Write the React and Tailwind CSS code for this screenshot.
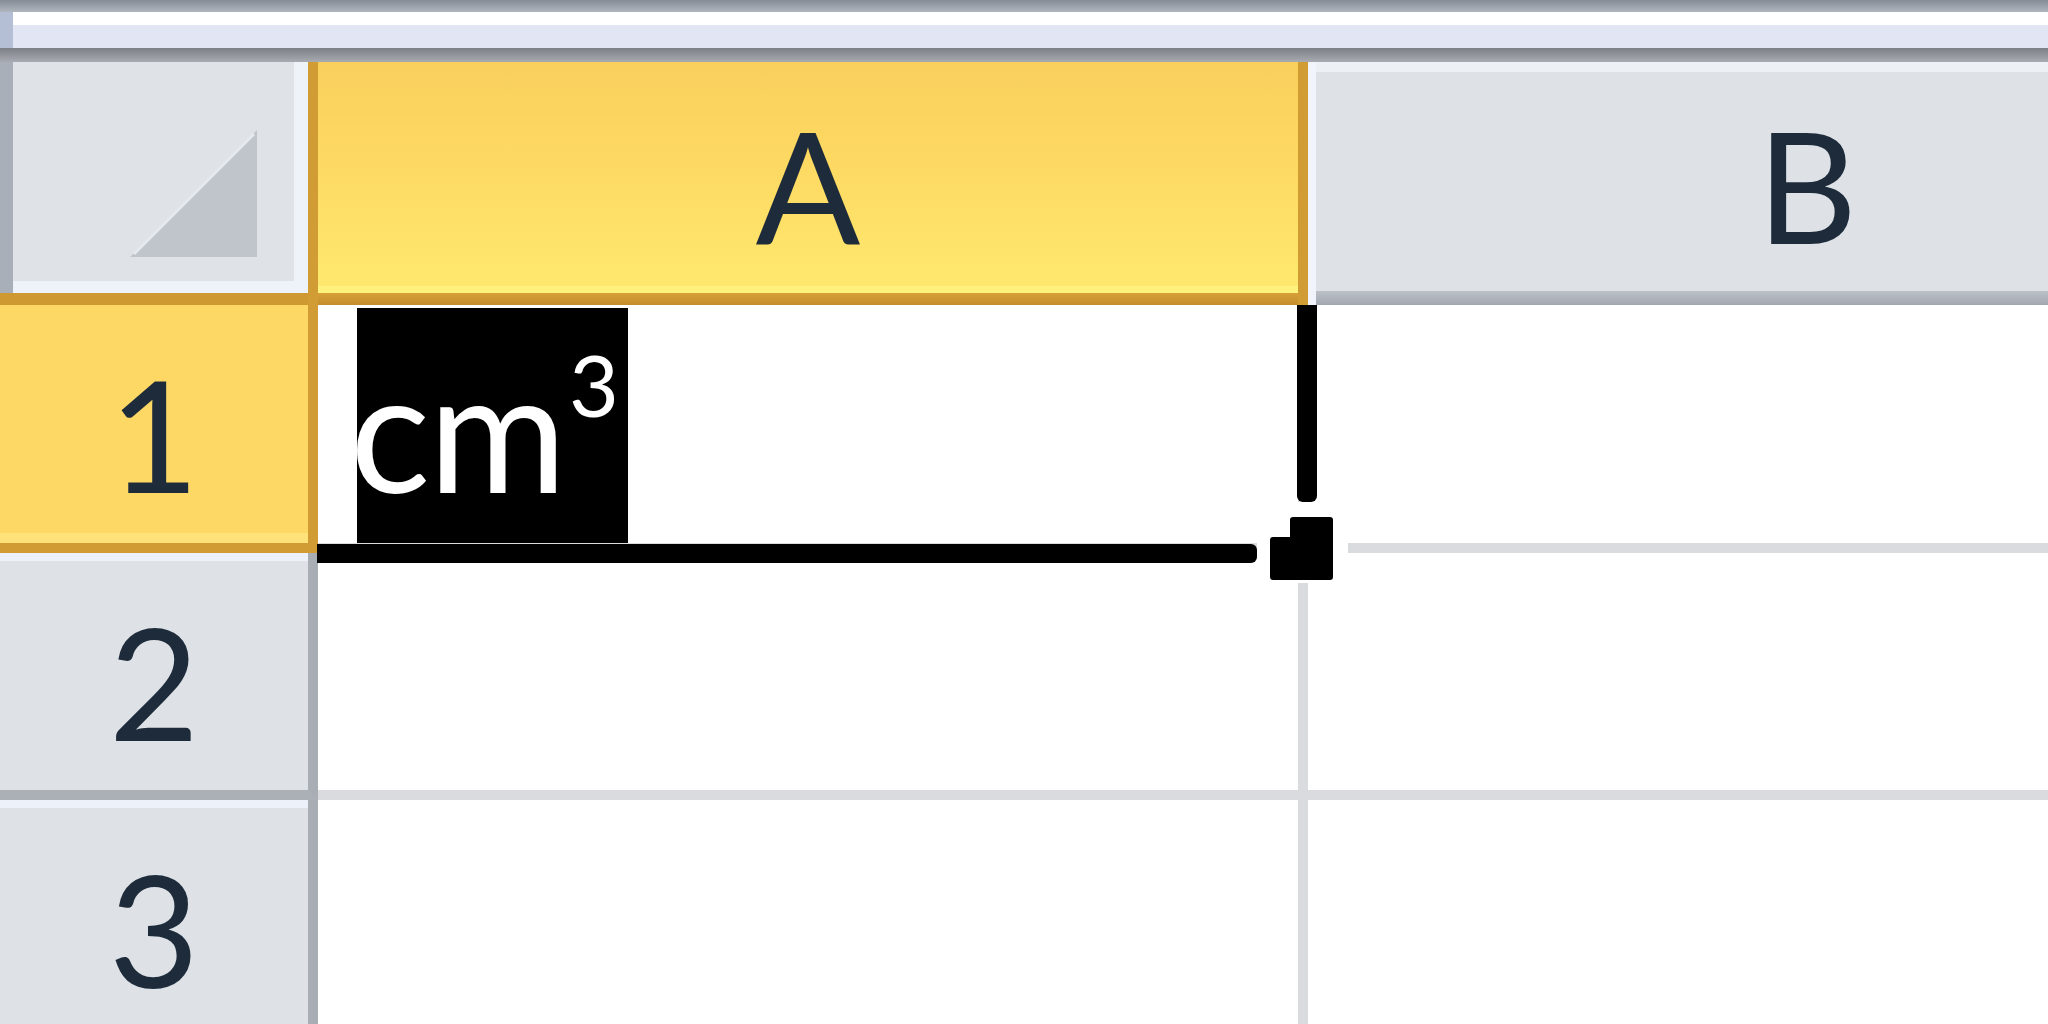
export default function App() {
  return (
    <div className="relative w-[2048px] h-[1024px] overflow-hidden bg-white font-['Lato','Liberation_Sans',sans-serif] text-[#1d2b3a]">
      {/* window top bars */}
      <div className="h-[12px] bg-gradient-to-b from-[#858c96] to-[#b0b6be]" />
      <div className="flex h-[36px]">
        <div className="w-[13px] shrink-0 bg-[#b4bed4]" />
        <div className="flex-1 flex flex-col">
          <div className="h-[13px] bg-white" />
          <div className="flex-1 bg-[#e2e6f4]" />
        </div>
      </div>
      <div className="h-[14px] bg-gradient-to-b from-[#7c7f86] to-[#a8acb2]" />

      {/* column header row */}
      <div className="flex h-[243px]">
        <div className="w-[13px] shrink-0 bg-[#a8afb8] border-b-[12px] border-[#cf9932]" />
        <div className="w-[295px] shrink-0 flex flex-col border-b-[12px] border-[#cf9932]">
          <div className="flex-1 flex items-end justify-end pr-[37px] pb-[24px] bg-[#dfe3e8] border-r-[14px] border-b-[12px] border-[#eef3fa]">
            <svg width="127" height="127" viewBox="0 0 127 127">
              <polygon points="127,0 127,127 0,127" fill="#c0c5cb" />
              <line x1="124" y1="4" x2="4" y2="124" stroke="#e6eaef" strokeWidth="3" />
            </svg>
          </div>
        </div>
        <div className="w-[1000px] shrink-0 flex flex-col border-l-[10px] border-r-[10px] border-[#d29c35]">
          <div className="flex-1 flex justify-center pt-[45px] bg-gradient-to-b from-[#f9cf5c] via-[#fdda63] to-[#ffe86e] text-[155px] leading-none">
            A
          </div>
          <div className="h-[7px] bg-[#fff27c]" />
          <div className="h-[12px] bg-gradient-to-b from-[#d9a139] to-[#c48c2c]" />
        </div>
        <div className="w-[990px] shrink-0 flex flex-col border-l-[8px] border-[#f1f5fb]">
          <div className="h-[10px] bg-[#edf0f5]" />
          <div className="flex-1 flex justify-center pt-[35px] bg-[#dee2e7] text-[155px] leading-none">
            B
          </div>
          <div className="h-[14px] bg-gradient-to-b from-[#bcc1c7] to-[#a2a8af]" />
        </div>
      </div>

      {/* row 1 (selected) */}
      <div className="flex h-[248px]">
        <div className="w-[318px] shrink-0 flex flex-col border-r-[10px] border-b-[10px] border-[#d29c35] bg-[#fdd865]">
          <div className="flex-1 flex justify-center pt-[50px] text-[156px] leading-none">1</div>
          <div className="h-[10px] bg-[#ffe27a]" />
        </div>
        <div className="w-[990px] shrink-0 border-r-[10px] border-b-[10px] border-[#d9dbde]">
          <div className="ml-[39px] mt-[3px] h-[235px] w-[271px] bg-black text-white pt-[36px] text-[168px] leading-none whitespace-nowrap tracking-[-0.01em]">
            <span className="-ml-[7px]">cm</span>
            <span className="ml-[4px] text-[86px] leading-[0] align-[76px]">3</span>
          </div>
        </div>
        <div className="w-[990px] shrink-0 border-b-[10px] border-[#d9dbde]" />
      </div>

      {/* row 2 */}
      <div className="flex h-[247px]">
        <div className="w-[318px] shrink-0 flex flex-col border-r-[10px] border-r-[#a9aeb5] border-b-[10px] border-b-[#abb0b7] bg-[#dee2e7]">
          <div className="h-[8px] bg-[#edf2fa]" />
          <div className="flex-1 flex justify-center pt-[42px] text-[156px] leading-none">2</div>
        </div>
        <div className="w-[990px] shrink-0 border-r-[10px] border-b-[10px] border-[#d9dbde]" />
        <div className="w-[990px] shrink-0 border-b-[10px] border-[#d9dbde]" />
      </div>

      {/* row 3 */}
      <div className="flex h-[247px]">
        <div className="w-[318px] shrink-0 flex flex-col border-r-[10px] border-r-[#a9aeb5] border-b-[10px] border-b-[#abb0b7] bg-[#dee2e7]">
          <div className="h-[8px] bg-[#edf2fa]" />
          <div className="flex-1 flex justify-center pt-[42px] text-[156px] leading-none">3</div>
        </div>
        <div className="w-[990px] shrink-0 border-r-[10px] border-b-[10px] border-[#d9dbde]" />
        <div className="w-[990px] shrink-0 border-b-[10px] border-[#d9dbde]" />
      </div>

      {/* active cell border overlay */}
      <div className="absolute left-[317px] top-[544px] w-[940px] h-[19px] bg-black rounded-r-[6px]" />
      <div className="absolute left-[1297px] top-[305px] w-[20px] h-[197px] bg-black rounded-b-[6px]" />
      <div className="absolute left-[1257px] top-[502px] w-[91px] h-[81px] bg-white" />
      <svg className="absolute left-[1270px] top-[517px]" width="63" height="63" viewBox="0 0 63 63">
        <path d="M20 3 Q20 0 23 0 L60 0 Q63 0 63 3 L63 60 Q63 63 60 63 L3 63 Q0 63 0 60 L0 23 Q0 20 3 20 L20 20 Z" fill="#000" />
      </svg>
    </div>
  );
}
